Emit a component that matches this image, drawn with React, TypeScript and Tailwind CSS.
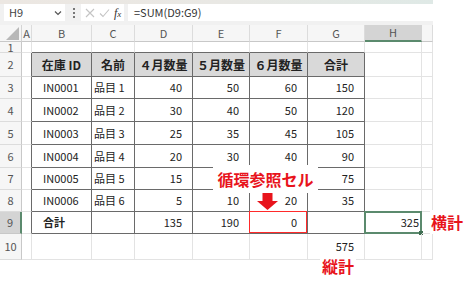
import React from 'react'

const COLS = ['A', 'B', 'C', 'D', 'E', 'F', 'G', 'H', 'I']

type Row = { n: number; cells: string[] }

const rows: Row[] = [
  { n: 1, cells: ['', '', '', '', '', '', '', '', ''] },
  { n: 2, cells: ['', '在庫 ID', '名前', '４月数量', '５月数量', '６月数量', '合計', '', ''] },
  { n: 3, cells: ['', 'IN0001', '品目 1', '40', '50', '60', '150', '', ''] },
  { n: 4, cells: ['', 'IN0002', '品目 2', '30', '40', '50', '120', '', ''] },
  { n: 5, cells: ['', 'IN0003', '品目 3', '25', '35', '45', '105', '', ''] },
  { n: 6, cells: ['', 'IN0004', '品目 4', '20', '30', '40', '90', '', ''] },
  { n: 7, cells: ['', 'IN0005', '品目 5', '15', '', '', '75', '', ''] },
  { n: 8, cells: ['', 'IN0006', '品目 6', '5', '10', '20', '35', '', ''] },
  { n: 9, cells: ['', '合計', '', '135', '190', '0', '', '325', ''] },
  { n: 10, cells: ['', '', '', '', '', '', '575', '', ''] },
]

function cellClass(r: number, c: number) {
  const inTable = r >= 2 && r <= 9 && c >= 1 && c <= 6
  const rightDark = inTable || (c === 0 && r >= 2 && r <= 9)
  const bottomDark = inTable || (r === 1 && c >= 1 && c <= 6)
  let cls = 'relative flex items-center overflow-visible whitespace-nowrap border-r border-b '
  cls += rightDark ? 'border-r-[#6a6a6a] ' : 'border-r-[#e3e3e3] '
  cls += bottomDark ? 'border-b-[#6a6a6a] ' : 'border-b-[#e3e3e3] '
  if (r === 2 && inTable) cls += 'justify-center bg-[#d9d9d9] font-bold text-[12px] '
  else if (c === 1) cls += 'pl-[11px] '
  else if (c === 2) cls += 'pl-[2px] '
  else if (c === 7) cls += 'justify-end pr-[2px] '
  else if (c >= 3) cls += 'justify-end pr-[10px] '
  if (r === 9 && c === 1) cls += 'font-bold '
  return cls
}

function FormulaBar() {
  return (
    <div className="relative h-[25px] w-[433px] bg-[#f1f1f1]">
      <div className="h-[4px] w-full bg-gradient-to-r from-[#ece7e2] via-[#e9e8e4] to-[#dfe9e6]" />
      <div className="flex h-[17px] items-center">
        <div className="ml-[4px] flex h-[17px] w-[61px] items-center justify-between bg-white pl-[5px] pr-[3px] text-[11px] text-[#444]">
          <span>H9</span>
          <svg width="8" height="6" viewBox="0 0 8 6">
            <path d="M1 1.5 L4 4.5 L7 1.5" fill="none" stroke="#555" strokeWidth="1.2" />
          </svg>
        </div>
        <div className="ml-[6px] flex w-[6px] flex-col items-center gap-[2px]">
          <div className="h-[2px] w-[2px] bg-[#777]" />
          <div className="h-[2px] w-[2px] bg-[#777]" />
          <div className="h-[2px] w-[2px] bg-[#777]" />
        </div>
        <div className="ml-[4px] flex h-[17px] w-[43px] items-center gap-[4px] bg-white pl-[4px]">
          <svg width="10" height="10" viewBox="0 0 10 10">
            <path d="M1 1 L9 9 M9 1 L1 9" stroke="#c4c4c4" strokeWidth="1.1" />
          </svg>
          <svg width="11" height="10" viewBox="0 0 11 10">
            <path d="M1 5.5 L4 8.5 L10 1.5" fill="none" stroke="#c4c4c4" strokeWidth="1.1" />
          </svg>
          <span className="font-['Liberation_Serif',serif] text-[12px] italic leading-none text-[#333]">
            f<span className="text-[9px]">x</span>
          </span>
        </div>
        <div className="ml-[4px] flex h-[17px] flex-1 items-center bg-white pl-[6px] text-[11px] text-[#333]">
          =SUM(D9:G9)
        </div>
      </div>
    </div>
  )
}

export default function App() {
  return (
    <div className="relative h-[289px] w-[474px] overflow-hidden bg-white font-['Noto_Sans_CJK_JP',sans-serif] text-[11px] text-[#222]">
      <FormulaBar />
      <div className="grid w-[433px] grid-cols-[22px_10px_60px_43px_58px_57px_58px_57px_57px_11px] grid-rows-[17px_11px_24px_22px_23px_23px_23px_22px_22px_22px_26px]">
        <div className="relative border-r border-b border-r-[#d4d4d4] border-b-[#c8c8c8] bg-[#f6f6f6]">
          <svg className="absolute bottom-[1px] right-[2px]" width="13" height="13" viewBox="0 0 13 13">
            <path d="M13 0 L13 13 L0 13 Z" fill="#b8b8b8" />
          </svg>
        </div>
        {COLS.map((col) => (
          <div
            key={col}
            className={
              col === 'H'
                ? 'flex items-center justify-center border-r border-b-2 border-r-[#d4d4d4] border-b-[#5b8a6d] bg-[#d4d4d4] text-[11px] text-[#555]'
                : 'flex items-center justify-center border-r border-b border-r-[#dcdcdc] border-b-[#c8c8c8] bg-[#f6f6f6] text-[11px] text-[#555]'
            }
          >
            {col === 'I' ? '' : col}
          </div>
        ))}
        {rows.map((row) => (
          <React.Fragment key={row.n}>
            <div
              className={
                row.n === 9
                  ? 'flex items-center justify-center border-r-2 border-b border-r-[#5b8a6d] border-b-[#c8c8c8] bg-[#d4d4d4] text-[11px] text-[#555]'
                  : 'flex items-center justify-center border-r border-b border-r-[#c8c8c8] border-b-[#dcdcdc] bg-[#f6f6f6] text-[11px] text-[#555]'
              }
            >
              {row.n}
            </div>
            {row.cells.map((value, c) => (
              <div key={c} className={cellClass(row.n, c)}>
                {value}
                {row.n === 9 && c === 5 && (
                  <div className="absolute -top-px -left-px right-0 bottom-0 border border-[#ff2a2a]" />
                )}
                {row.n === 9 && c === 7 && (
                  <>
                    <div className="absolute -top-px -left-px -right-px -bottom-px border-2 border-[#5b8a6d]" />
                    <div className="absolute -right-[2px] -bottom-[2px] h-[4px] w-[4px] bg-[#3f6e52]" />
                  </>
                )}
              </div>
            ))}
          </React.Fragment>
        ))}
      </div>

      <div className="absolute left-[213px] top-[165px] flex h-[28px] w-[105px] items-center justify-center bg-white text-[16px] font-bold leading-none text-[#e8141c]">
        循環参照セル
      </div>
      <svg className="absolute left-[257px] top-[193px]" width="21" height="17" viewBox="0 0 21 17">
        <rect x="5.5" y="0" width="10" height="8" fill="#e8141c" />
        <path d="M0 8 L21 8 L10.5 17 Z" fill="#e8141c" />
      </svg>
      <div className="absolute left-[430px] top-[210px] flex h-[24px] items-center bg-white pl-[1px] text-[16px] font-bold leading-none text-[#e8141c]">
        横計
      </div>
      <div className="absolute left-[320px] top-[254px] flex h-[24px] items-center bg-white px-[2px] text-[16px] font-bold leading-none text-[#e8141c]">
        縦計
      </div>
    </div>
  )
}
